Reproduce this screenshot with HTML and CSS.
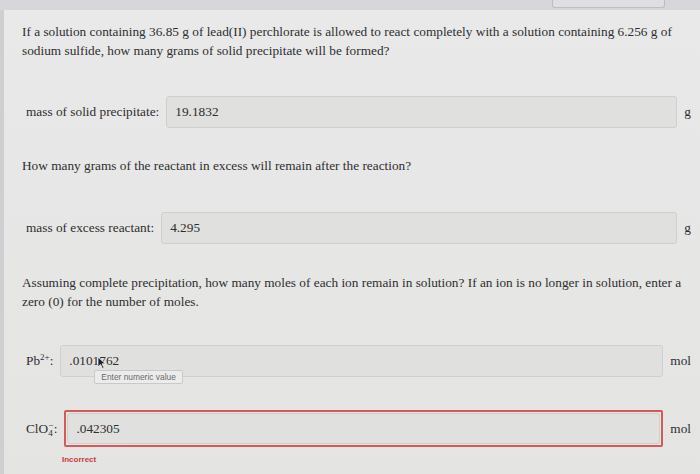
FILE: index.html
```html
<!DOCTYPE html>
<html>
<head>
<meta charset="utf-8">
<link rel="stylesheet" href="styles.css">
</head>
<body>
<div class="topbar"><div class="topbtn"></div></div>
<main class="panel">
  <p class="q q1">If a solution containing 36.85 g of lead(II) perchlorate is allowed to react completely with a solution containing 6.256 g of sodium sulfide, how many grams of solid precipitate will be formed?</p>
  <div class="row row1">
    <span class="label">mass of solid precipitate:</span>
    <div class="input">19.1832</div>
    <span class="unit">g</span>
  </div>
  <p class="q q2">How many grams of the reactant in excess will remain after the reaction?</p>
  <div class="row row2">
    <span class="label">mass of excess reactant:</span>
    <div class="input">4.295</div>
    <span class="unit">g</span>
  </div>
  <p class="q q3">Assuming complete precipitation, how many moles of each ion remain in solution? If an ion is no longer in solution, enter a zero (0) for the number of moles.</p>
  <div class="row row3">
    <span class="label">Pb<sup>2+</sup>:</span>
    <div class="input tipwrap">.0101762
      <svg class="cursor" width="9" height="13" viewBox="0 0 9 13"><path d="M1 1 L1 11 L3.5 8.5 L5.5 12.5 L7 11.8 L5 7.8 L8.3 7.8 Z" fill="#222" stroke="#eee" stroke-width="0.8"/></svg>
      <span class="tooltip">Enter numeric value</span>
    </div>
    <span class="unit">mol</span>
  </div>
  <div class="row row4">
    <span class="label">ClO<span class="ch">−</span><span class="sb">4</span>:</span>
    <div class="errbox"><div class="input">.042305</div></div>
    <span class="unit">mol</span>
  </div>
  <div class="err">Incorrect</div>
</main>
</body>
</html>
```
FILE: styles.css
```css
html, body {
  margin: 0;
  padding: 0;
}
body {
  width: 700px;
  height: 474px;
  overflow: hidden;
  background: #e7e7e7;
  font-family: "Liberation Serif", "Times New Roman", serif;
  color: #2e2e2e;
}
.topbar {
  height: 10px;
  background: #d7d7db;
  display: flex;
  justify-content: flex-end;
  padding-right: 35px;
}
.topbtn {
  width: 111px;
  height: 7px;
  border: 1px solid #bdbdc2;
  border-top: none;
  border-radius: 0 0 3px 3px;
  background: #dfdfe3;
}
.panel {
  height: 464px;
  border-left: 4px solid #cfcfd2;
  background: linear-gradient(180deg, #e9e9ea 0%, #e6e6e5 60%, #e4e4e3 100%);
  padding: 0 9px 0 18px;
  box-sizing: border-box;
}
.q {
  margin: 0;
  font-size: 13.3px;
  line-height: 19px;
}
.q1 { padding-top: 12px; }
.q2 { margin-top: 28px; }
.q3 { margin-top: 29px; }
.row {
  display: flex;
  align-items: center;
  gap: 7px;
  font-size: 13.3px;
  padding-left: 4px;
}
.row1 { margin-top: 36px; }
.row2 { margin-top: 37px; }
.row3 { margin-top: 34px; }
.row4 { margin-top: 33px; }
.label { white-space: nowrap; }
.label sup { font-size: 9px; vertical-align: 5px; line-height: 0; }
.ch {
  font-size: 9px;
  vertical-align: 5px;
  line-height: 0;
}
.sb {
  font-size: 9px;
  vertical-align: -3px;
  line-height: 0;
  margin-left: -5px;
  margin-right: 1px;
}
.input {
  flex: 1;
  height: 32px;
  border: 1px solid #cfcfcd;
  border-radius: 3px;
  background: #e0e0de;
  box-sizing: border-box;
  display: flex;
  align-items: center;
  padding-left: 8px;
  font-size: 13.3px;
}
.unit { white-space: nowrap; }
.tipwrap { position: relative; }
.cursor {
  position: absolute;
  left: 36px;
  top: 10px;
}
.tooltip {
  position: absolute;
  left: 33px;
  top: 24px;
  height: 12px;
  padding: 0 6px;
  border: 1px solid #c9c9c9;
  border-radius: 2px;
  background: #ececec;
  font-family: "Liberation Sans", Arial, sans-serif;
  font-size: 8.4px;
  line-height: 12px;
  color: #6a6a6a;
}
.errbox {
  flex: 1;
  display: flex;
  border: 2px solid #d35a5a;
  border-radius: 2px;
  padding: 1px;
}
.errbox .input { height: 31px; }
.err {
  margin: 8px 0 0 40px;
  font-family: "Liberation Sans", Arial, sans-serif;
  font-size: 8px;
  font-weight: bold;
  color: #c43b3b;
}
```
